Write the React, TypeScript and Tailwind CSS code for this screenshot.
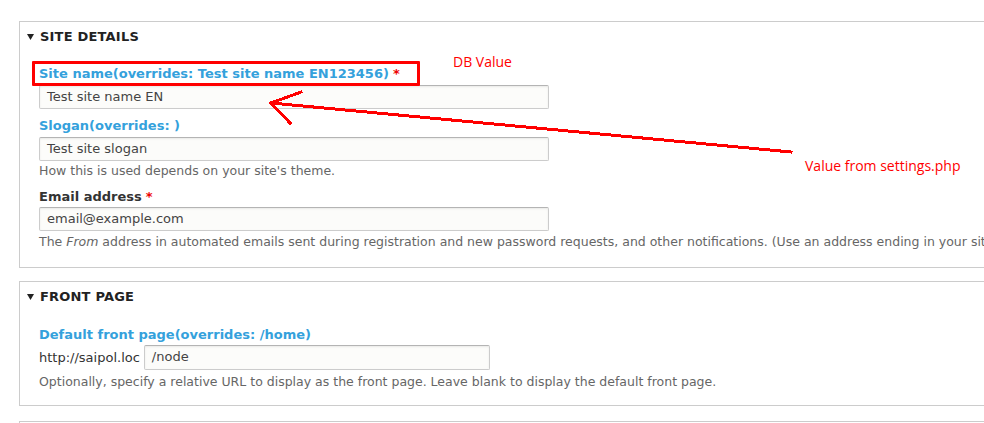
import React from 'react';

const font = { fontFamily: '"DejaVu Sans", "Liberation Sans", sans-serif' };
const noteFont = { fontFamily: '"Open Sans", "Noto Sans", sans-serif' };

const Input: React.FC<{ value: string; className?: string }> = ({ value, className = '' }) => (
  <div
    className={`h-[24px] border border-[#ccc] border-t-[#b4b4b4] bg-[#fcfcfa] rounded-[2px] shadow-[inset_0_1px_2px_rgba(0,0,0,0.08)] pl-[7px] text-[13px] leading-[22px] text-[#444] ${className}`}
  >
    {value}
  </div>
);

const Legend: React.FC<{ title: string }> = ({ title }) => (
  <div className="flex items-center pt-[6px] pl-[7px] h-[24px]">
    <svg width="7" height="6" viewBox="0 0 7 6" className="mr-[6px] mt-[-1px]">
      <path d="M0 0H7L3.5 6Z" fill="#222" />
    </svg>
    <span className="text-[13px] leading-[18px] font-bold uppercase text-[#222] tracking-[0.2px]">{title}</span>
  </div>
);

const Required = () => <span className="text-[#e00] ml-[4px]">*</span>;

const App: React.FC = () => {
  return (
    <div className="relative w-[984px] h-[423px] overflow-hidden bg-white leading-[18px]" style={font}>
      <div className="pt-[21px] pl-[19px] flex flex-col">
        {/* site details */}
        <div className="w-[1100px] border border-[#ccc] pb-[16px]">
          <Legend title="Site details" />
          <div className="pl-[19px] pt-[19px]">
            <div className="relative w-fit text-[13px] leading-[18px] font-bold text-[#34a1dc] mb-[2px]">
              Site name(overrides: Test site name EN123456)
              <Required />
              <div className="absolute -left-[7px] -top-[4px] w-[388px] h-[25px] border-[3px] border-[#f00] rounded-[1px]" />
            </div>
            <Input value="Test site name EN" className="w-[510px]" />

            <div className="mt-[8px] text-[13px] leading-[18px] font-bold text-[#34a1dc] mb-[2px]">Slogan(overrides: )</div>
            <Input value="Test site slogan" className="w-[510px]" />
            <div className="mt-[1px] text-[12.5px] leading-[18px] text-[#666]">How this is used depends on your site's theme.</div>

            <div className="mt-[8px] text-[13px] leading-[18px] font-bold text-[#333] mb-[1px]">
              Email address
              <Required />
            </div>
            <Input value="email@example.com" className="w-[510px]" />
            <div className="mt-[2px] text-[12.5px] leading-[18px] text-[#666] whitespace-nowrap">
              The <em>From</em> address in automated emails sent during registration and new password requests, and other
              notifications. (Use an address ending in your site's domain to help prevent this email being flagged as spam.)
            </div>
          </div>
        </div>

        {/* front page */}
        <div className="mt-[13px] w-[1100px] border border-[#ccc] pb-[14px]">
          <Legend title="Front page" />
          <div className="pl-[19px] pt-[20px]">
            <div className="text-[13px] leading-[18px] font-bold text-[#34a1dc] mb-[1px]">
              Default front page(overrides: /home)
            </div>
            <div className="flex items-center">
              <span className="text-[13px] text-[#333] mr-[4px]">http://saipol.loc</span>
              <Input value="/node" className="w-[346px] h-[25px]" />
            </div>
            <div className="mt-[3px] text-[12.5px] leading-[18px] text-[#666] whitespace-nowrap">
              Optionally, specify a relative URL to display as the front page. Leave blank to display the default front page.
            </div>
          </div>
        </div>

        <div className="mt-[15px] w-[1100px] h-[40px] border border-[#ccc]" />
      </div>

      {/* annotations */}
      <div className="absolute left-[453px] top-[51px] text-[14px] leading-[21px] text-[#f00]" style={noteFont}>
        DB Value
      </div>
      <div className="absolute left-[805px] top-[155px] text-[14px] leading-[21px] text-[#f00]" style={noteFont}>
        Value from settings.php
      </div>
      <svg className="absolute left-0 top-0" width="984" height="423" shapeRendering="crispEdges">
        <g stroke="#f00" strokeWidth="3" fill="none" strokeLinecap="square">
          <line x1="271" y1="103" x2="791" y2="152" />
          <line x1="271" y1="103" x2="301" y2="92" />
          <line x1="271" y1="103" x2="290" y2="123" />
        </g>
      </svg>
    </div>
  );
};

export default App;
